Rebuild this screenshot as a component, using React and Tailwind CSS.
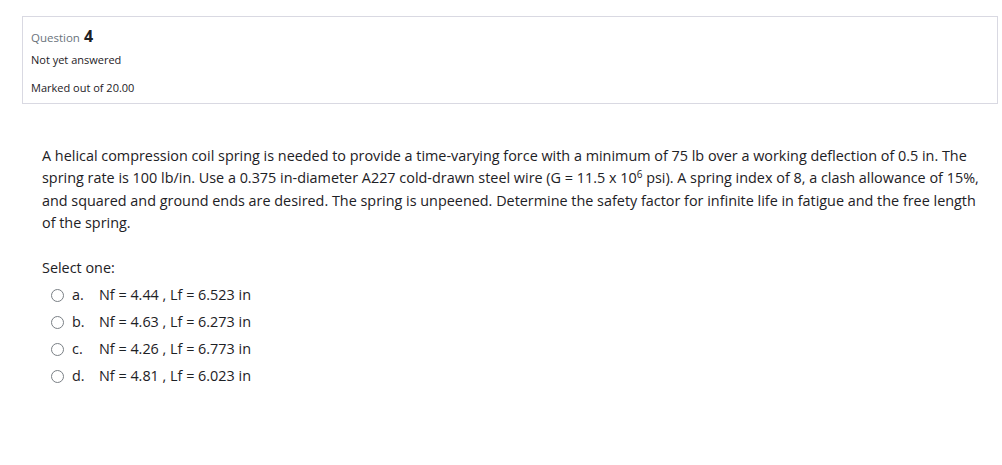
const options = [
    { letter: "a.", text: "Nf = 4.44 , Lf = 6.523 in" },
    { letter: "b.", text: "Nf = 4.63 , Lf = 6.273 in" },
    { letter: "c.", text: "Nf = 4.26 , Lf = 6.773 in" },
    { letter: "d.", text: "Nf = 4.81 , Lf = 6.023 in" },
];

export default function App() {
    return (
        <div
            className="h-[465px] w-[1002px] bg-white pt-4 pl-[22px] pr-1 text-[#1d2125]"
            style={{ fontFamily: '"Open Sans", "Noto Sans", sans-serif' }}
        >
            <div className="h-[88px] border border-[#d9d9e2] px-2 pt-[7px]">
                <div className="flex items-baseline gap-1 text-[11.5px] text-[#6a737b]">
                    <span>Question</span>
                    <span className="text-[16px] font-bold text-[#1d2125]">4</span>
                </div>
                <div className="mt-[4px] text-[11px]">Not yet answered</div>
                <div className="mt-[11px] text-[11px]">Marked out of 20.00</div>
            </div>

            <div className="pt-[41px] pl-5 pr-3 text-[14.4px] leading-[22.4px]">
                <p>
                    A helical compression coil spring is needed to provide a time-varying force with a
                    minimum of 75 lb over a working deflection of 0.5 in. The spring rate is 100 lb/in. Use a
                    0.375 in-diameter A227 cold-drawn steel wire (G = 11.5 x 10
                    <sup className="text-[10px] leading-none">6</sup> psi). A spring index of 8, a clash
                    allowance of 15%, and squared and ground ends are desired. The spring is unpeened.
                    Determine the safety factor for infinite life in fatigue and the free length of the
                    spring.
                </p>

                <div className="mt-[22px]">Select one:</div>
                <div className="mt-[3px] flex flex-col">
                    {options.map((o) => (
                        <div key={o.letter} className="flex h-[27px] items-center pl-[9px]">
                            <span className="h-[13px] w-[13px] rounded-full border border-[#7a7f85]" />
                            <span className="ml-[8px] w-[27px]">{o.letter}</span>
                            <span>{o.text}</span>
                        </div>
                    ))}
                </div>
            </div>
        </div>
    );
}
